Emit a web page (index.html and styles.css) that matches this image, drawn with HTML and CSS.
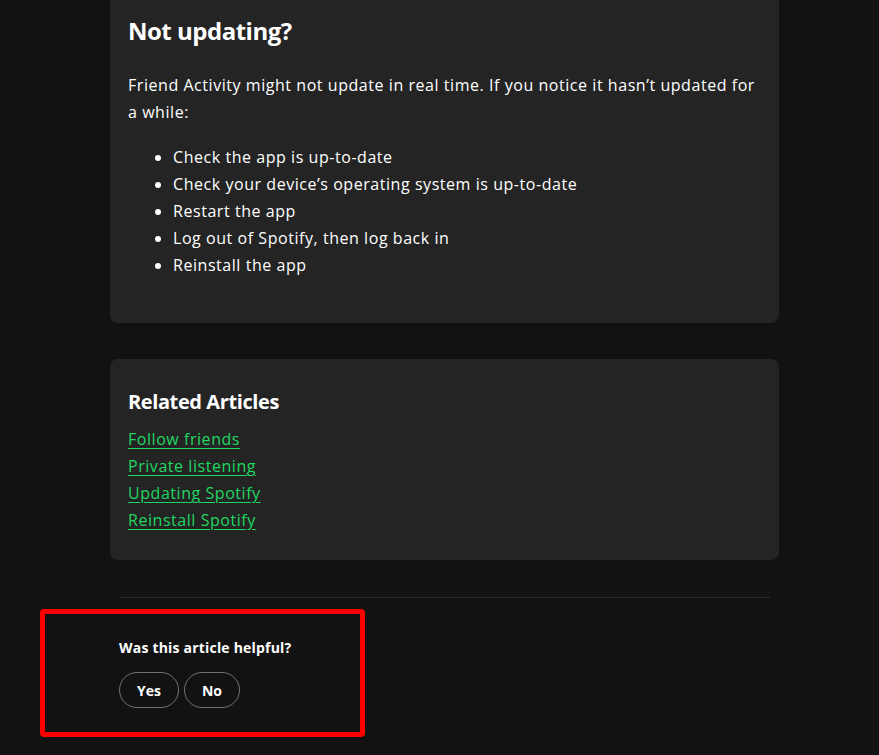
FILE: index.html
```html
<!DOCTYPE html>
<html lang="en">
<head>
<meta charset="utf-8">
<title>Not updating?</title>
<link rel="stylesheet" href="styles.css">
</head>
<body>
<main class="main">
  <section class="card card-article">
    <h2 class="title">Not updating?</h2>
    <p class="text">Friend Activity might not update in real time. If you notice it hasn’t updated for a while:</p>
    <ul class="list">
      <li>Check the app is up-to-date</li>
      <li>Check your device’s operating system is up-to-date</li>
      <li>Restart the app</li>
      <li>Log out of Spotify, then log back in</li>
      <li>Reinstall the app</li>
    </ul>
  </section>
  <section class="card card-related">
    <h3 class="related-title">Related Articles</h3>
    <ul class="links">
      <li><a href="#">Follow friends</a></li>
      <li><a href="#">Private listening</a></li>
      <li><a href="#">Updating Spotify</a></li>
      <li><a href="#">Reinstall Spotify</a></li>
    </ul>
  </section>
  <hr class="divider">
  <div class="feedback">
    <p class="feedback-q">Was this article helpful?</p>
    <div class="feedback-btns">
      <button class="pill">Yes</button>
      <button class="pill">No</button>
    </div>
  </div>
</main>
<div class="highlight"></div>
</body>
</html>
```
FILE: styles.css
```css
html, body {
  margin: 0;
  padding: 0;
  background: #121212;
  color: #ffffff;
  font-family: "Open Sans", Lato, "Liberation Sans", sans-serif;
}
body {
  height: 755px;
  overflow: hidden;
  position: relative;
}
.main {
  width: 669px;
  margin: -9px 0 0 110px;
}
.card {
  background: #242424;
  border-radius: 8px;
  padding: 24px 18px;
}
.title {
  margin: 0;
  font-size: 24px;
  line-height: 32px;
  font-weight: 700;
  letter-spacing: -0.5px;
}
.text {
  margin: 25px 0 0;
  font-size: 16px;
  line-height: 27px;
  font-weight: 500;
  letter-spacing: 0.55px;
}
.list {
  margin: 18px 0 20px;
  padding-left: 45px;
  font-size: 16px;
  line-height: 27px;
  font-weight: 500;
  letter-spacing: 0.55px;
}
.card-related {
  margin-top: 36px;
  padding: 29px 18px 26px;
}
.related-title {
  margin: 0 0 10px;
  font-size: 20px;
  line-height: 28px;
  font-weight: 700;
  letter-spacing: -0.4px;
}
.links {
  list-style: none;
  margin: 0;
  padding: 0;
  font-size: 16px;
  line-height: 27px;
  font-weight: 500;
  letter-spacing: 0.55px;
}
.links a {
  color: #1ed760;
  text-decoration: underline;
  text-underline-offset: 3px;
}
.divider {
  margin: 37px 9px 0;
  border: 0;
  border-top: 1px solid #2a2a2a;
  height: 0;
}
.feedback {
  padding: 40px 9px 0;
}
.feedback-q {
  margin: 0;
  font-size: 14px;
  line-height: 20px;
  font-weight: 700;
  letter-spacing: 0.2px;
}
.feedback-btns {
  display: flex;
  gap: 5px;
  margin-top: 14px;
}
.pill {
  background: transparent;
  color: #ffffff;
  border: 1px solid #727272;
  border-radius: 18px;
  height: 36px;
  padding: 0 17px;
  font-family: inherit;
  font-size: 14px;
  font-weight: 700;
}
.highlight {
  position: absolute;
  left: 40px;
  top: 609px;
  width: 315px;
  height: 118px;
  border: 5px solid #ff0000;
  border-radius: 4px;
}
```
